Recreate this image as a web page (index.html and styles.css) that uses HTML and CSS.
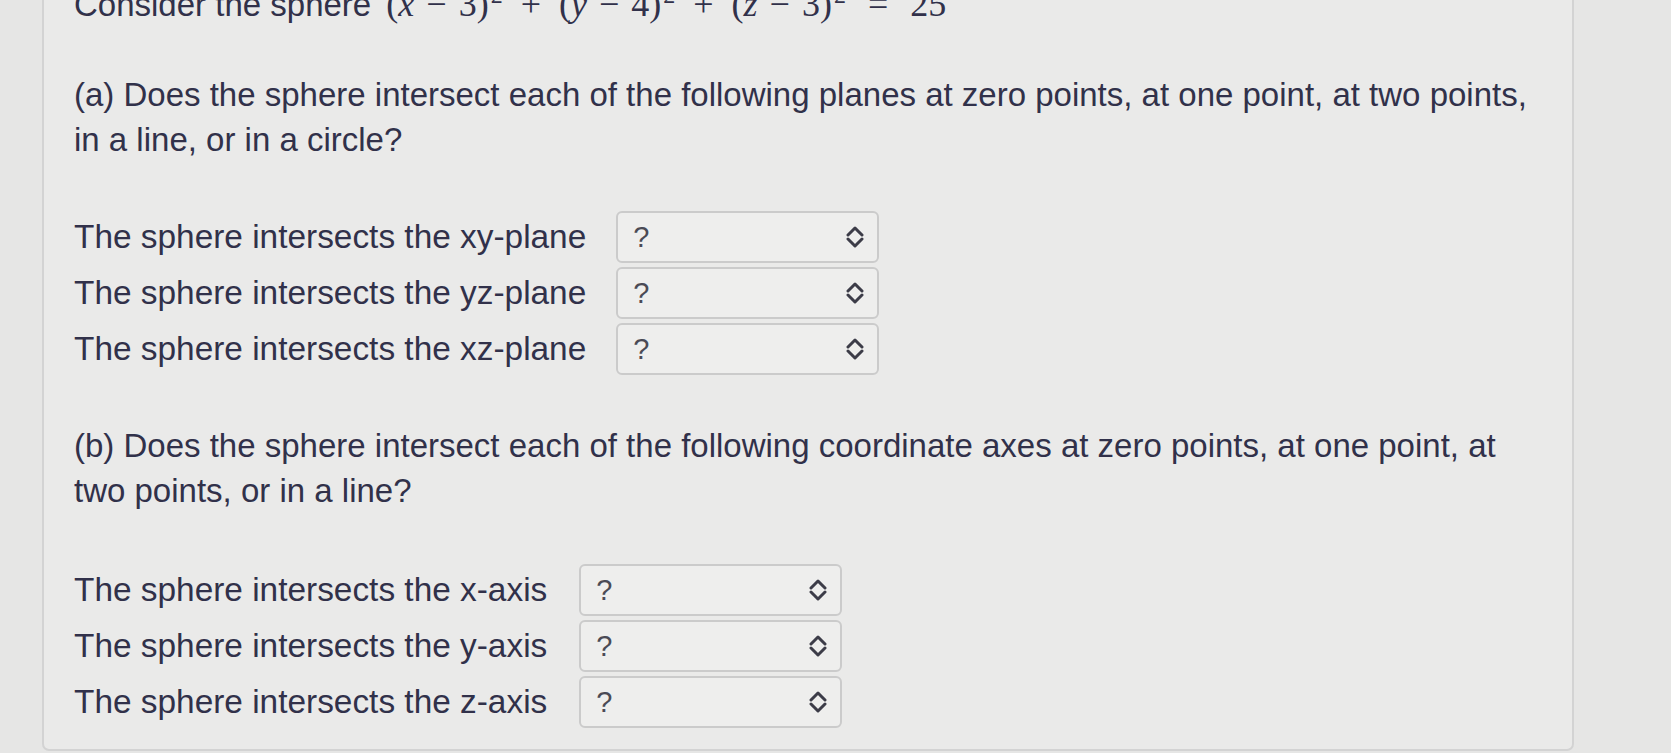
FILE: index.html
```html
<!DOCTYPE html>
<html>
<head>
<meta charset="utf-8">
<link rel="stylesheet" href="styles.css">
</head>
<body>
<div class="card">
  <p class="intro">Consider the sphere <span class="math">(<i>x</i><span class="op">−</span>3)<sup>2</sup><span class="op op-plus">+</span>(<i>y</i><span class="op">−</span>4)<sup>2</sup><span class="op op-plus">+</span>(<i>z</i><span class="op">−</span>3)<sup>2</sup><span class="op op-eq">=</span>25</span></p>

  <p class="question">(a) Does the sphere intersect each of the following planes at zero points, at one point, at two points, in a line, or in a circle?</p>

  <div class="rows">
    <div class="label">The sphere intersects the xy-plane</div>
    <div class="select"><span class="value">?</span><svg class="chev" viewBox="0 0 18 22" width="18" height="22"><path d="M2 9 L9 2 L16 9 M2 13 L9 20 L16 13"/></svg></div>
    <div class="label">The sphere intersects the yz-plane</div>
    <div class="select"><span class="value">?</span><svg class="chev" viewBox="0 0 18 22" width="18" height="22"><path d="M2 9 L9 2 L16 9 M2 13 L9 20 L16 13"/></svg></div>
    <div class="label">The sphere intersects the xz-plane</div>
    <div class="select"><span class="value">?</span><svg class="chev" viewBox="0 0 18 22" width="18" height="22"><path d="M2 9 L9 2 L16 9 M2 13 L9 20 L16 13"/></svg></div>
  </div>

  <p class="question">(b) Does the sphere intersect each of the following coordinate axes at zero points, at one point, at two points, or in a line?</p>

  <div class="rows rows-axes">
    <div class="label">The sphere intersects the x-axis</div>
    <div class="select"><span class="value">?</span><svg class="chev" viewBox="0 0 18 22" width="18" height="22"><path d="M2 9 L9 2 L16 9 M2 13 L9 20 L16 13"/></svg></div>
    <div class="label">The sphere intersects the y-axis</div>
    <div class="select"><span class="value">?</span><svg class="chev" viewBox="0 0 18 22" width="18" height="22"><path d="M2 9 L9 2 L16 9 M2 13 L9 20 L16 13"/></svg></div>
    <div class="label">The sphere intersects the z-axis</div>
    <div class="select"><span class="value">?</span><svg class="chev" viewBox="0 0 18 22" width="18" height="22"><path d="M2 9 L9 2 L16 9 M2 13 L9 20 L16 13"/></svg></div>
  </div>
</div>
</body>
</html>
```

FILE: styles.css
```css
html, body {
  margin: 0;
  padding: 0;
  height: 100%;
  overflow: hidden;
}
body {
  background: #e6e6e5;
  font-family: "Liberation Sans", Arial, sans-serif;
  color: #31314a;
}
.card {
  margin-left: 42px;
  width: 1532px;
  margin-top: -69px;
  padding: 40px 28px 21px 30px;
  background: #eaeae9;
  border: 2px solid #d3d3d3;
  border-radius: 7px;
  box-sizing: border-box;
}
p {
  margin: 0;
}
.intro {
  font-size: 33px;
  line-height: 45px;
  white-space: nowrap;
}
.math {
  font-family: "Liberation Serif", "Times New Roman", serif;
  font-size: 36px;
  margin-left: 6px;
}
.math sup {
  font-size: 24px;
  margin-left: 2px;
}
.op {
  margin: 0 12px;
}
.op-plus {
  margin: 0 18px;
}
.op-eq {
  margin: 0 22px;
}
.question {
  font-size: 33px;
  line-height: 45px;
  margin-top: 45px;
}
.rows {
  display: grid;
  grid-template-columns: max-content 263px;
  column-gap: 30px;
  row-gap: 4px;
  align-items: center;
  margin-top: 49px;
  margin-bottom: 48px;
}
.rows-axes {
  margin-top: 51px;
  margin-bottom: 0;
  column-gap: 32px;
}
.label {
  font-size: 33.4px;
  line-height: 40px;
  white-space: nowrap;
}
.select {
  height: 52px;
  box-sizing: border-box;
  border: 2px solid #cbcbcb;
  border-radius: 6px;
  background: #eeeeed;
  display: flex;
  align-items: center;
  justify-content: space-between;
  padding: 0 13px 0 15px;
}
.value {
  font-size: 29px;
  color: #4a4a55;
}
.chev {
  fill: none;
  stroke: #3c3c48;
  stroke-width: 3;
  stroke-linecap: round;
  stroke-linejoin: round;
}
```
